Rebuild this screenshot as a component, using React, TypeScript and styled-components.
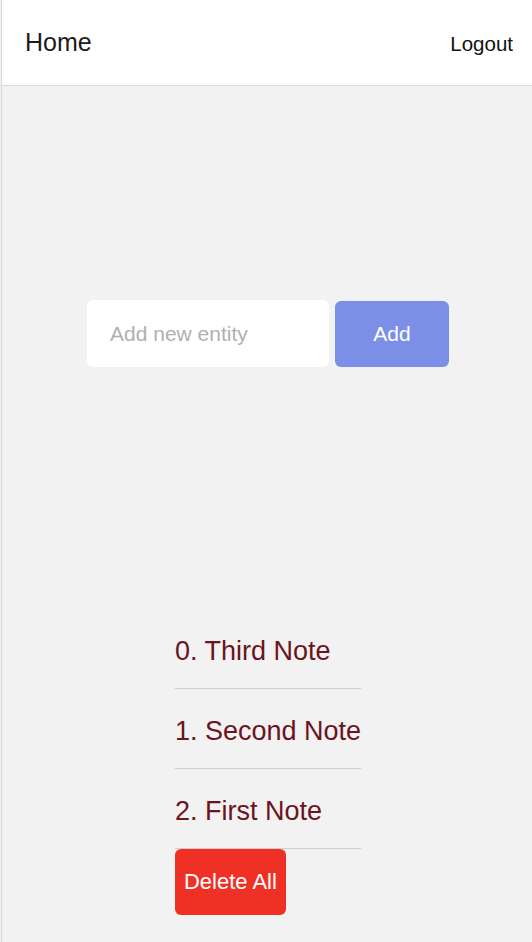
import * as React from "react";
import styled, { createGlobalStyle } from "styled-components";

const GlobalStyle = createGlobalStyle`
  html, body {
    margin: 0;
    padding: 0;
    background: #f2f2f2;
    font-family: "Liberation Sans", Arial, sans-serif;
  }
  * {
    box-sizing: border-box;
  }
`;

const Page = styled.div`
  margin-left: 1px;
  min-height: 942px;
  border-left: 1px solid #d6d6d6;
  background: #f2f2f2;
  display: flex;
  flex-direction: column;
`;

const Header = styled.header`
  height: 86px;
  background: #fff;
  border-bottom: 1px solid #dcdcdc;
  display: flex;
  align-items: center;
  justify-content: space-between;
  padding: 0 19px 0 23px;
`;

const Title = styled.h1`
  margin: 0;
  font-size: 25px;
  font-weight: normal;
  color: #1b1b1b;
`;

const LogoutButton = styled.button`
  margin-top: 3px;
  padding: 0;
  border: none;
  background: none;
  font-family: inherit;
  font-size: 20.5px;
  color: #111;
  cursor: pointer;
`;

const Main = styled.main`
  display: flex;
  flex-direction: column;
  align-items: center;
  padding: 214px 0 0 2px;
`;

const Form = styled.form`
  display: flex;
  align-items: center;
  gap: 6px;
`;

const Input = styled.input`
  width: 242px;
  height: 67px;
  border: none;
  border-radius: 6px;
  background: #fff;
  padding: 0 23px;
  font-family: inherit;
  font-size: 21px;
  color: #222;
  outline: none;
  &::placeholder {
    color: #b0b0b0;
  }
`;

interface IButtonProps {
  $color: string;
}

const Button = styled.button<IButtonProps>`
  height: 66px;
  border: none;
  border-radius: 6px;
  background: ${(props) => props.$color};
  color: #fff;
  font-family: inherit;
  font-size: 21px;
  cursor: pointer;
`;

const AddButton = styled(Button)`
  width: 114px;
  margin-top: 1px;
`;

const DeleteButton = styled(Button)`
  padding: 0 9px;
  font-size: 22px;
`;

const List = styled.div`
  margin-top: 242px;
  display: flex;
  flex-direction: column;
  align-items: stretch;
`;

const Note = styled.div`
  padding: 27px 0 21px;
  line-height: 31px;
  font-size: 27px;
  color: #6b1420;
  border-bottom: 1px solid #cfcfcf;
  white-space: nowrap;
`;

const Footer = styled.div`
  display: flex;
`;

const notes = ["Third Note", "Second Note", "First Note"];

export default function App() {
  const [text, setText] = React.useState("");

  return (
    <>
      <GlobalStyle />
      <Page>
        <Header>
          <Title>Home</Title>
          <LogoutButton>Logout</LogoutButton>
        </Header>
        <Main>
          <Form onSubmit={(e) => e.preventDefault()}>
            <Input
              placeholder="Add new entity"
              value={text}
              onChange={(e) => setText(e.target.value)}
            />
            <AddButton $color="#7b8fe6">Add</AddButton>
          </Form>
          <List>
            {notes.map((note, i) => (
              <Note key={note}>
                {i}. {note}
              </Note>
            ))}
            <Footer>
              <DeleteButton $color="#ef3125">Delete All</DeleteButton>
            </Footer>
          </List>
        </Main>
      </Page>
    </>
  );
}
